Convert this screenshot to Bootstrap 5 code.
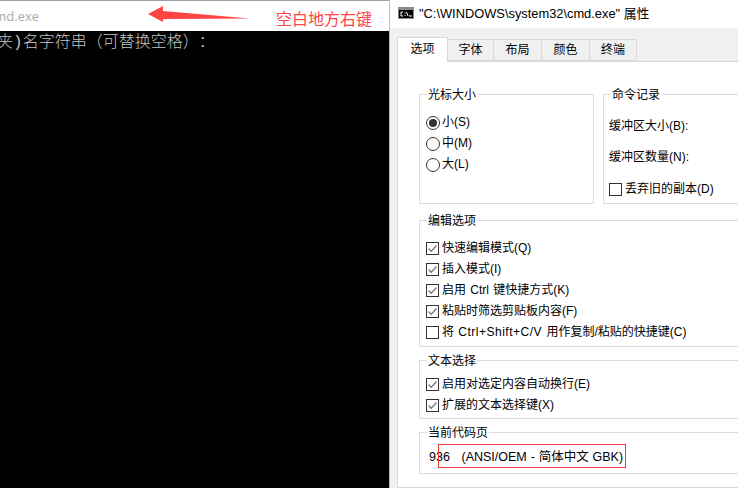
<!DOCTYPE html>
<html lang="zh"><head><meta charset="utf-8">
<link href="https://cdn.jsdelivr.net/npm/bootstrap@5.3.0/dist/css/bootstrap.min.css" rel="stylesheet">
<style>
html,body{margin:0;height:488px;overflow:hidden;background:#fff}
body{font-family:"Liberation Sans","Noto Sans CJK SC",sans-serif;font-size:12px;color:#000;position:relative;text-spacing-trim:space-all}
.stage{width:738px;height:488px}
.con-pane{width:389px;background:#000;flex:none}
.con-title{height:31px;background:#fff;border-top:1px solid #a0a0a0;color:#a8a8a8;font-size:13px;font-family:"Open Sans","Noto Sans CJK SC",sans-serif;line-height:30px;white-space:nowrap}
.con-title span{margin-left:-12px;display:inline-block}
.con-text{color:#c4c4c4;font-size:16px;line-height:18px;white-space:nowrap;margin-left:-3px;font-family:"Noto Sans CJK SC",sans-serif;font-weight:300}
.con-text b{font-family:"Liberation Mono",monospace;font-weight:400}
.sep{width:1px;background:#bdbdbd;flex:none}
.dlg{flex:1 1 auto;min-width:0;overflow:hidden}
.dlg-head{height:28px;background:#fff;padding-left:8px;gap:5px;font-size:12.85px;white-space:nowrap}
.tabzone{background:#f0f0f0;height:460px;padding:9px 0 0 7px}
.tabrow{height:24px;position:relative;z-index:1}
.tabx{height:22px;margin-top:2px;border:1px solid #d9d9d9;border-left:0;line-height:21px;background:#f0f0f0;width:48px;text-align:center;flex:none}
.tabx.on{height:25px;margin-top:0;border:1px solid #d9d9d9;border-bottom:0;background:#fff;width:51px;line-height:22px}
.tabx.t2{width:46px}.tabx.t5{width:47px}
.tabbody{background:#fff;border:1px solid #d9d9d9;border-right:0;height:427px;padding:32px 0 0 21px;white-space:nowrap}
.gbox{border:1px solid #dcdcdc;position:relative;flex:none}
.gbox>.gt{position:absolute;left:7px;top:-8px;background:#fff;padding:0 1px;line-height:16px}
.b1{width:175px;height:110px;padding-top:17px}
.b2{width:200px;height:110px;padding-top:16px;margin-left:9px}
.b3{width:340px;height:127px;margin-top:16px;padding-top:17px;word-spacing:1px}
.b3 .wide{letter-spacing:.5px}
.b4{width:340px;height:59px;margin-top:13px;padding-top:13px}
.b5{width:340px;height:42px;margin-top:13px}
.ln{height:21px;line-height:21px;padding-left:6px;gap:3px}
.b1 .ln{gap:2px}
.b2 .ln{padding-left:5px;margin-top:6px}
.rd{width:14px;height:14px;border:1px solid #333;border-radius:50%;background:#fff;flex:none;position:relative;display:block}
.rd.on::after{content:"";position:absolute;left:2px;top:2px;width:8px;height:8px;border-radius:50%;background:#333}
.ck{width:13px;height:13px;flex:none;display:block}
.tx2{padding-left:5px;line-height:31px}
.cp{position:absolute;left:9px;top:16px;font-size:12.5px;line-height:17px;word-spacing:.4px}
.redbox{position:absolute;left:438px;top:444px;width:188px;height:24px;border:1px solid #f23a3a}
.note{position:absolute;left:276px;top:10px;color:#f44;font-size:16px;line-height:20px;white-space:nowrap}
.arrow{position:absolute;left:146px;top:4px;width:106px;height:20px;display:block}
.winicon{width:16px;height:12px;display:block;flex:none;margin-top:-2px}
</style></head><body>
<svg width="0" height="0" class="d-block position-absolute"><defs>
<symbol id="cb" viewBox="0 0 13 13"><rect x=".5" y=".5" width="12" height="12" fill="#fff" stroke="#333"/></symbol>
<symbol id="cbc" viewBox="0 0 13 13"><rect x=".5" y=".5" width="12" height="12" fill="#fff" stroke="#333"/><path d="M2.5 6.5 5.2 9.2 10.5 3.5" fill="none" stroke="#777" stroke-width="1.3"/></symbol>
</defs></svg>
<div class="stage d-flex">
 <div class="con-pane overflow-hidden">
  <div class="con-title"><span>cmd.exe</span></div>
  <div class="con-text">夹<b>)</b>名字符串（可替换空格）：</div>
 </div>
 <div class="sep"></div>
 <div class="dlg">
  <div class="dlg-head d-flex align-items-center">
   <svg class="winicon" viewBox="0 0 16 12"><rect width="16" height="12" fill="#8a8a8a"/><rect x="1" y="3" width="14" height="8" fill="#000"/><path d="M5 5H3v4h2M7 5.5v1M7 8v1M8.5 5l1.5 4M11 9h3" stroke="#fff" fill="none"/></svg>
   <span>"C:\WINDOWS\system32\cmd.exe" 属性</span>
  </div>
  <div class="tabzone">
   <div class="tabrow d-flex align-items-start">
    <div class="tabx on">选项</div><div class="tabx t2">字体</div><div class="tabx">布局</div><div class="tabx">颜色</div><div class="tabx t5">终端</div>
   </div>
   <div class="tabbody">
    <div class="d-flex">
     <div class="gbox b1"><div class="gt">光标大小</div>
      <div class="ln d-flex align-items-center"><i class="rd on"></i>小(S)</div>
      <div class="ln d-flex align-items-center"><i class="rd"></i>中(M)</div>
      <div class="ln d-flex align-items-center"><i class="rd"></i>大(L)</div>
     </div>
     <div class="gbox b2"><div class="gt">命令记录</div>
      <div class="tx2"><div>缓冲区大小(B):</div><div>缓冲区数量(N):</div></div>
      <div class="ln d-flex align-items-center"><svg class="ck"><use href="#cb"/></svg>丢弃旧的副本(D)</div>
     </div>
    </div>
    <div class="gbox b3"><div class="gt">编辑选项</div>
     <div class="ln d-flex align-items-center"><svg class="ck"><use href="#cbc"/></svg>快速编辑模式(Q)</div>
     <div class="ln d-flex align-items-center"><svg class="ck"><use href="#cbc"/></svg>插入模式(I)</div>
     <div class="ln d-flex align-items-center"><svg class="ck"><use href="#cbc"/></svg>启用 Ctrl 键快捷方式(K)</div>
     <div class="ln d-flex align-items-center"><svg class="ck"><use href="#cbc"/></svg>粘贴时筛选剪贴板内容(F)</div>
     <div class="ln d-flex align-items-center"><svg class="ck"><use href="#cb"/></svg><span>将 <span class="wide">Ctrl+Shift+C/V</span> 用作复制/粘贴的快捷键(C)</span></div>
    </div>
    <div class="gbox b4"><div class="gt">文本选择</div>
     <div class="ln d-flex align-items-center"><svg class="ck"><use href="#cbc"/></svg>启用对选定内容自动换行(E)</div>
     <div class="ln d-flex align-items-center"><svg class="ck"><use href="#cbc"/></svg>扩展的文本选择键(X)</div>
    </div>
    <div class="gbox b5"><div class="gt">当前代码页</div>
     <div class="cp">936 &nbsp; (ANSI/OEM - 简体中文 GBK)</div>
    </div>
   </div>
  </div>
 </div>
</div>
<svg class="arrow" viewBox="0 0 106 20"><path d="M2 10 17 2 17 7 104 14.5 17 15 17 18Z" fill="#f44"/></svg>
<div class="note">空白地方右键</div>
<div class="redbox"></div>
</body></html>
